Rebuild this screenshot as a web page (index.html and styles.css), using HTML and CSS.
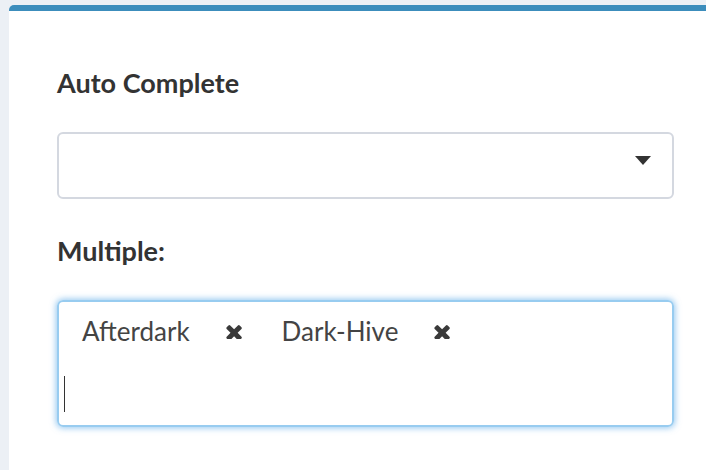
FILE: index.html
```html
<!DOCTYPE html>
<html>
<head>
<meta charset="utf-8">
<link rel="stylesheet" href="styles.css">
</head>
<body>
<div class="page">
  <div class="card">
    <div class="group">
      <label class="label">Auto Complete</label>
      <div class="select">
        <span class="caret"></span>
      </div>
    </div>
    <div class="group">
      <label class="label">Multiple:</label>
      <div class="multi">
        <div class="tags">
          <span class="tag"><span class="tag-text">Afterdark</span><svg class="tag-x" viewBox="90 210 1216 1224"><path d="M1298 1322q0 40-28 68l-136 136q-28 28-68 28t-68-28l-294-294-294 294q-28 28-68 28t-68-28l-136-136q-28-28-28-68t28-68l294-294-294-294q-28-28-28-68t28-68l136-136q28-28 68-28t68 28l294 294 294-294q28-28 68-28t68 28l136 136q28 28 28 68t-28 68l-294 294 294 294q28 28 28 68z"/></svg></span>
          <span class="tag"><span class="tag-text">Dark-Hive</span><svg class="tag-x" viewBox="90 210 1216 1224"><path d="M1298 1322q0 40-28 68l-136 136q-28 28-68 28t-68-28l-294-294-294 294q-28 28-68 28t-68-28l-136-136q-28-28-28-68t28-68l294-294-294-294q-28-28-28-68t28-68l136-136q28-28 68-28t68 28l294 294 294-294q28-28 68-28t68 28l136 136q28 28 28 68t-28 68l-294 294 294 294q28 28 28 68z"/></svg></span>
        </div>
        <div class="input-line"><span class="cursor"></span></div>
      </div>
    </div>
  </div>
</div>
</body>
</html>
```
FILE: styles.css
```css
html, body {
  margin: 0;
  height: 100%;
}
body {
  background: #ecf0f5;
  font-family: Lato, "Liberation Sans", sans-serif;
  color: #333;
  overflow: hidden;
}
.page {
  padding: 5px 0 0 9px;
  height: 100%;
  box-sizing: border-box;
}
.card {
  background: #fff;
  border-top: 6px solid #3c8dbc;
  border-top-left-radius: 5px;
  padding: 56px 32px 0 48px;
  height: 100%;
  box-sizing: border-box;
}
.group {
  display: flex;
  flex-direction: column;
}
.group + .group {
  margin-top: 36px;
}
.label {
  font-size: 27px;
  font-weight: 700;
  line-height: 32px;
  color: #333;
  margin-bottom: 33px;
}
.select {
  height: 67px;
  box-sizing: border-box;
  border: 2px solid #d4d8e0;
  border-radius: 6px;
  display: flex;
  align-items: flex-start;
  justify-content: flex-end;
  padding: 22px 21px 0 0;
}
.caret {
  width: 0;
  height: 0;
  border-left: 8px solid transparent;
  border-right: 8px solid transparent;
  border-top: 9px solid #333;
}
.multi {
  height: 127px;
  box-sizing: border-box;
  border: 2px solid #98ccf0;
  border-radius: 6px;
  box-shadow: 0 0 6px 1px rgba(102, 175, 233, 0.7);
  padding: 9px 0 0 23px;
  display: flex;
  flex-direction: column;
}
.tags {
  display: flex;
  gap: 40px;
  height: 40px;
  align-items: center;
}
.tag {
  display: flex;
  align-items: center;
  gap: 36px;
  font-size: 26px;
  color: #444;
}
.tag-x {
  width: 16px;
  height: 16px;
  fill: #3a3a3a;
}
.input-line {
  margin-top: 25px;
  margin-left: -18px;
  height: 36px;
}
.cursor {
  display: block;
  width: 1px;
  height: 36px;
  background: #333;
}
```
